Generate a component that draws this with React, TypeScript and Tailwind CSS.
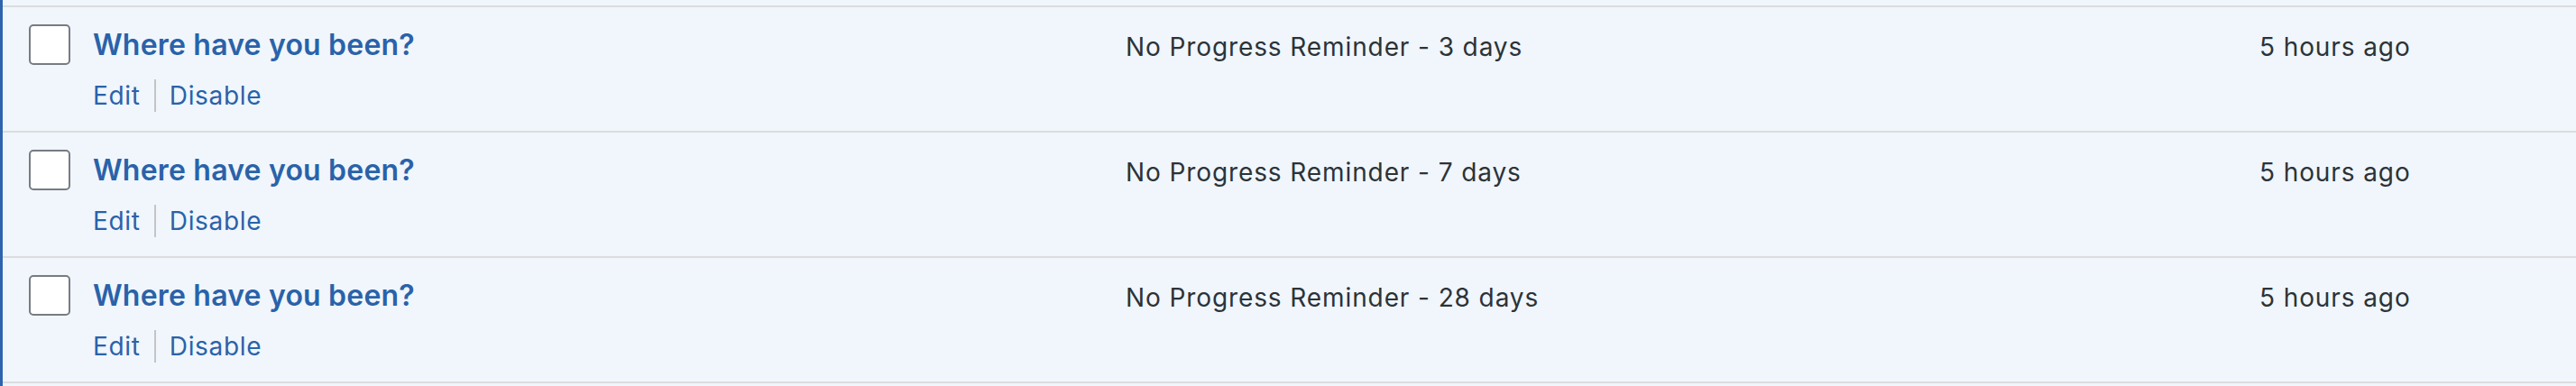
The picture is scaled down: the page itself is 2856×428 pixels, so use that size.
import React from "react";

const rows = [
  { days: "3 days" },
  { days: "7 days" },
  { days: "28 days" },
];

export default function App() {
  return (
    <div
      className="w-[2856px] h-[428px] bg-[#f0f6fc] border-l-[3px] border-[#2f63ad] pt-[6px] overflow-hidden"
      style={{ fontFamily: 'Inter, "Noto Sans", sans-serif' }}
    >
      <div className="border-t-2 border-[#dcdcde]">
        {rows.map((r, i) => (
          <div key={i} className="flex h-[139px] border-b-2 border-[#dcdcde]">
            <div className="w-[100px] pl-[29px] pt-[19px]">
              <div className="w-[46px] h-[45px] bg-white border-2 border-[#787c82] rounded-[5px]" />
            </div>
            <div className="w-[1145px] pt-[20px]">
              <div className="text-[32px] leading-[44px] font-semibold text-[#2a62a9] tracking-[0.2px]">
                Where have you been?
              </div>
              <div className="mt-[14px] flex items-center h-[40px] text-[28px] leading-[40px] text-[#2a62a9] tracking-[0.7px]">
                <span>Edit</span>
                <span className="ml-[15px] mr-[15px] h-[36px] border-l-2 border-[#c3c4c7]" />
                <span>Disable</span>
              </div>
            </div>
            <div className="w-[1257px] pt-[24px] text-[28px] leading-[40px] text-[#2c3338] tracking-[0.9px]">
              No Progress Reminder - {r.days}
            </div>
            <div className="flex-1 pt-[24px] text-[28px] leading-[40px] text-[#2c3338] tracking-[0.9px]">
              5 hours ago
            </div>
          </div>
        ))}
      </div>
    </div>
  );
}
